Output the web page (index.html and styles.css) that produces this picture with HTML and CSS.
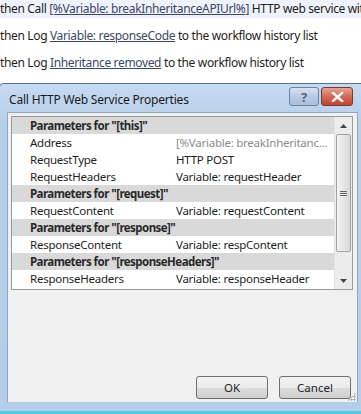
FILE: index.html
```html
<!DOCTYPE html>
<html lang="en">
<head>
    <meta charset="UTF-8">
    <meta name="viewport" content="width=device-width, initial-scale=1.0">
    <title>Call HTTP Web Service Properties</title>
    <link rel="stylesheet" href="styles.css">
</head>
<body>
    <div class="workflow">
        <div class="step step-active">then Call <a href="#">[%Variable: breakInheritanceAPIUrl%]</a> HTTP web service wit</div>
        <div class="step">then Log <a href="#">Variable: responseCode</a> to the workflow history list</div>
        <div class="step">then Log <a href="#">Inheritance removed</a> to the workflow history list</div>
    </div>

    <div class="dialog">
        <div class="titlebar">
            <span class="title">Call HTTP Web Service Properties</span>
            <div class="caption-buttons">
                <span class="cap-btn cap-help">?</span>
                <span class="cap-btn cap-close">
                    <svg width="13" height="10" viewBox="0 0 13 10">
                        <path d="M2 1 L11 9 M11 1 L2 9" stroke="#fff" stroke-width="2.4" stroke-linecap="square"/>
                    </svg>
                </span>
            </div>
        </div>

        <div class="client">
            <div class="props">
                <div class="props-rows">
                    <div class="group">Parameters for "[this]"</div>
                    <div class="row"><span class="name">Address</span><span class="value muted">[%Variable: breakInheritanc...</span></div>
                    <div class="row"><span class="name">RequestType</span><span class="value">HTTP POST</span></div>
                    <div class="row"><span class="name">RequestHeaders</span><span class="value">Variable: requestHeader</span></div>
                    <div class="group">Parameters for "[request]"</div>
                    <div class="row"><span class="name">RequestContent</span><span class="value">Variable: requestContent</span></div>
                    <div class="group">Parameters for "[response]"</div>
                    <div class="row"><span class="name">ResponseContent</span><span class="value">Variable: respContent</span></div>
                    <div class="group">Parameters for "[responseHeaders]"</div>
                    <div class="row"><span class="name">ResponseHeaders</span><span class="value">Variable: responseHeader</span></div>
                </div>
                <div class="scrollbar">
                    <div class="arrow">
                        <svg width="7" height="4" viewBox="0 0 7 4"><path d="M0 4 L3.5 0 L7 4 Z" fill="#444"/></svg>
                    </div>
                    <div class="track">
                        <div class="thumb"><span class="grip"></span></div>
                    </div>
                    <div class="arrow">
                        <svg width="7" height="4" viewBox="0 0 7 4"><path d="M0 0 L3.5 4 L7 0 Z" fill="#444"/></svg>
                    </div>
                </div>
            </div>

            <div class="actions">
                <button class="btn">OK</button>
                <button class="btn">Cancel</button>
            </div>
            <span class="grip-corner"></span>
        </div>
    </div>
    <div class="taskbar-line"></div>
</body>
</html>
```

FILE: styles.css
```css
body {
    margin: 0;
    width: 361px;
    height: 414px;
    overflow: hidden;
    background: #fff;
    font-family: "Noto Sans", "Open Sans", sans-serif;
    font-size: 11.5px;
    letter-spacing: -0.25px;
    color: #1e1e1e;
}

/* workflow lines above the dialog */
.workflow {
    height: 83px;
}
.step {
    height: 18px;
    line-height: 18px;
    margin-bottom: 9px;
    white-space: nowrap;
    overflow: hidden;
    font-size: 12px;
    letter-spacing: -0.35px;
}
.step-active {
    background: #eef2fa;
}
.step a {
    color: #3d4763;
    text-decoration: underline;
}

/* dialog window */
.dialog {
    margin: 0 -6px 0 -2px;
    height: 327px;
    background: linear-gradient(#c6daf1, #b6cfe9 40px, #b4cde8);
    border: 1px solid #5a6c84;
    border-bottom: none;
    border-radius: 6px 6px 0 0;
    padding: 0 8px 0 8px;
    display: flex;
    flex-direction: column;
}
.titlebar {
    height: 28px;
    display: flex;
    align-items: center;
    justify-content: space-between;
}
.title {
    font-size: 12px;
    letter-spacing: -0.2px;
    color: #1a1a1a;
    padding-left: 2px;
    padding-top: 2px;
}
.caption-buttons {
    display: flex;
    gap: 2px;
    align-self: flex-start;
    margin-top: 3px;
    margin-right: 5px;
}
.cap-btn {
    width: 28px;
    height: 17px;
    border: 1px solid #6d83a3;
    border-radius: 3px;
    display: flex;
    align-items: center;
    justify-content: center;
}
.cap-help {
    background: linear-gradient(#d6e3f2, #b9cbe3 50%, #a9bfdc);
    color: #55657d;
    font-weight: bold;
    font-size: 13px;
}
.cap-close {
    width: 30px;
    background: linear-gradient(#e4a594, #cf6b58 50%, #c2432e);
    border-color: #7a3a32;
}

.client {
    position: relative;
    flex: 1;
    background: #f0f0f0;
    border: 1px solid #8ea5c4;
    border-bottom: none;
    margin-bottom: 9px;
    padding: 3px 4px 0 3px;
    display: flex;
    flex-direction: column;
}

/* property grid */
.props {
    height: 172px;
    border: 1px solid #9a9a9a;
    background: #fff;
    display: flex;
}
.props-rows {
    flex: 1;
}
.group,
.row {
    height: 17px;
    line-height: 17px;
    white-space: nowrap;
}
.group {
    background: #d9d9d9;
    font-weight: bold;
    letter-spacing: -0.55px;
    padding-left: 18px;
    color: #2a2a2a;
}
.row {
    display: flex;
    padding-left: 18px;
}
.name {
    width: 146px;
}
.muted {
    color: #8c8c8c;
}

.scrollbar {
    width: 17px;
    background: #ececec;
    border-left: 1px solid #e2e2e2;
    display: flex;
    flex-direction: column;
}
.arrow {
    height: 17px;
    display: flex;
    align-items: center;
    justify-content: center;
}
.track {
    flex: 1;
}
.thumb {
    margin: 0 1px;
    height: 116px;
    border: 1px solid #a2a2a2;
    border-radius: 2px;
    background: linear-gradient(90deg, #f4f4f4, #e4e4e4 60%, #d8d8d8);
    display: flex;
    align-items: center;
    justify-content: center;
}
.grip {
    width: 7px;
    height: 5px;
    border-top: 1px solid #666;
    border-bottom: 1px solid #666;
    box-sizing: border-box;
    background: linear-gradient(#666, #666) center / 100% 1px no-repeat;
}

.actions {
    margin-top: auto;
    margin-bottom: 3px;
    display: flex;
    justify-content: flex-end;
    gap: 11px;
    padding-right: 2px;
}
.btn {
    width: 72px;
    height: 23px;
    border: 1px solid #707070;
    border-radius: 3px;
    background: linear-gradient(#f2f2f2, #ebebeb 50%, #dddddd 51%, #cfcfcf);
    font-family: "Noto Sans", "Open Sans", sans-serif;
    font-size: 11.5px;
    color: #1e1e1e;
    padding: 0;
}
.grip-corner {
    position: absolute;
    right: 1px;
    bottom: 1px;
    width: 9px;
    height: 9px;
    background: radial-gradient(circle, #b8b8b8 1px, transparent 1.2px) 0 0 / 3px 3px;
    clip-path: polygon(100% 0, 100% 100%, 0 100%);
}

.taskbar-line {
    position: absolute;
    left: 0;
    top: 411px;
    width: 361px;
    height: 3px;
    background: #54c8e8;
}
```
